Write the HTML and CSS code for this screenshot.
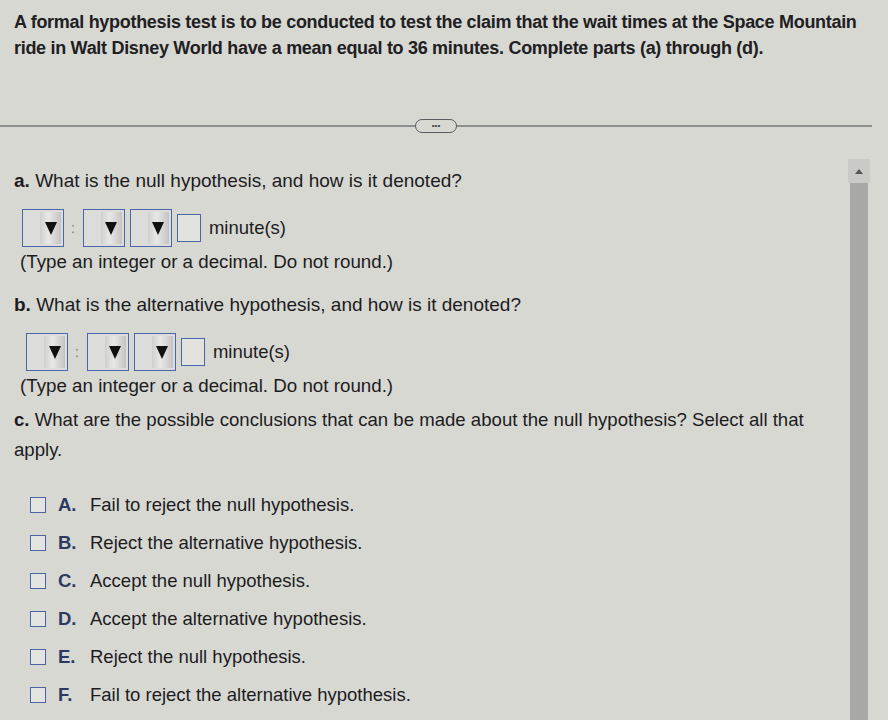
FILE: index.html
```html
<!DOCTYPE html>
<html>
<head>
<meta charset="utf-8">
<link rel="stylesheet" href="styles.css">
</head>
<body>
<div class="page">
  <header class="intro">A formal hypothesis test is to be conducted to test the claim that the wait times at the Space Mountain ride in Walt Disney World have a mean equal to 36 minutes. Complete parts (a) through (d).</header>
  <div class="divider"><span class="line"></span><span class="pill">&bull;&bull;&bull;</span><span class="line"></span></div>
  <div class="body">
    <main class="content">
      <p class="q qa">a. What is the null hypothesis, and how is it denoted?</p>
      <div class="answer">
        <span class="sel"><span class="btn"><span class="tri"></span></span></span>
        <span class="colon">:</span>
        <span class="sel"><span class="btn"><span class="tri"></span></span></span>
        <span class="sel"><span class="btn"><span class="tri"></span></span></span>
        <span class="inp"></span>
        <span class="unit">minute(s)</span>
      </div>
      <p class="hint">(Type an integer or a decimal. Do not round.)</p>

      <p class="q qb">b. What is the alternative hypothesis, and how is it denoted?</p>
      <div class="answer ab">
        <span class="sel"><span class="btn"><span class="tri"></span></span></span>
        <span class="colon">:</span>
        <span class="sel"><span class="btn"><span class="tri"></span></span></span>
        <span class="sel"><span class="btn"><span class="tri"></span></span></span>
        <span class="inp"></span>
        <span class="unit">minute(s)</span>
      </div>
      <p class="hint">(Type an integer or a decimal. Do not round.)</p>

      <p class="q qc">c. What are the possible conclusions that can be made about the null hypothesis? Select all that apply.</p>
      <ul class="opts">
        <li><span class="box"></span><span class="letter">A.</span><span>Fail to reject the null hypothesis.</span></li>
        <li><span class="box"></span><span class="letter">B.</span><span>Reject the alternative hypothesis.</span></li>
        <li><span class="box"></span><span class="letter">C.</span><span>Accept the null hypothesis.</span></li>
        <li><span class="box"></span><span class="letter">D.</span><span>Accept the alternative hypothesis.</span></li>
        <li><span class="box"></span><span class="letter">E.</span><span>Reject the null hypothesis.</span></li>
        <li><span class="box"></span><span class="letter">F.</span><span>Fail to reject the alternative hypothesis.</span></li>
      </ul>
    </main>
    <aside class="scroll">
      <div class="up"><span class="uptri"></span></div>
      <div class="thumb"></div>
    </aside>
  </div>
</div>
</body>
</html>
```
FILE: styles.css
```css
html, body {
  margin: 0;
  padding: 0;
  background: #d8d8d3;
}
body {
  font-family: "Liberation Sans", Arial, sans-serif;
  color: #1c1c1e;
  width: 888px;
  height: 720px;
  overflow: hidden;
}
.page {
  display: flex;
  flex-direction: column;
  height: 720px;
}
.intro {
  padding: 9px 14px 0 14px;
  font-size: 18px;
  line-height: 26px;
  font-weight: bold;
  letter-spacing: -0.3px;
  color: #202022;
  height: 100px;
  box-sizing: border-box;
}
.divider {
  display: flex;
  align-items: center;
  margin-top: 19px;
  width: 872px;
}
.divider .line {
  flex: 1;
  height: 2px;
  background: #8c908e;
}
.pill {
  width: 40px;
  height: 12px;
  border: 1.5px solid #5a5c60;
  border-radius: 7px;
  font-size: 8px;
  line-height: 12px;
  text-align: center;
  color: #3a3c44;
}
.body {
  flex: 1;
  display: flex;
  min-height: 0;
}
.content {
  flex: 1;
  padding-left: 14px;
}
.q {
  margin: 0;
  font-size: 19px;
  line-height: 24px;
}
.q::first-letter {
  font-weight: bold;
}
.qa { margin-top: 36px; }
.qb { margin-top: 20px; }
.qc {
  margin-top: 8px;
  line-height: 30px;
  font-size: 18.6px;
}
.answer {
  display: flex;
  align-items: center;
  margin-top: 16px;
  margin-left: 8px;
  height: 38px;
}
.ab {
  margin-top: 16px;
  margin-left: 12px;
}
.sel {
  width: 42px;
  height: 38px;
  border: 1.5px solid #4b66a6;
  box-sizing: border-box;
  display: flex;
  justify-content: flex-end;
  padding: 2px;
  background: #dcdddb;
  margin-right: 5px;
}
.btn {
  width: 21px;
  height: 100%;
  background: linear-gradient(90deg, #cfcfcd, #e8e8e6 40%, #c4c4c2);
  display: flex;
  align-items: center;
  justify-content: center;
}
.tri {
  width: 0;
  height: 0;
  border-left: 6px solid transparent;
  border-right: 6px solid transparent;
  border-top: 13px solid #111;
}
.colon {
  font-size: 14px;
  color: #777;
  margin: 0 8px 0 2px;
}
.inp {
  width: 24px;
  height: 28px;
  border: 1.5px solid #4b66a6;
  box-sizing: border-box;
  background: #e2e2de;
}
.unit {
  font-size: 18.5px;
  margin-left: 8px;
}
.hint {
  margin: 4px 0 0 6px;
  font-size: 18.75px;
  line-height: 22px;
}
.opts {
  list-style: none;
  margin: 21px 0 0 16px;
  padding: 0;
}
.opts li {
  display: flex;
  align-items: center;
  height: 38px;
  font-size: 18.5px;
}
.box {
  width: 16px;
  height: 16px;
  border: 1.5px solid #4b66a6;
  box-sizing: border-box;
  background: #e4e4e0;
  margin-right: 12px;
}
.letter {
  font-weight: bold;
  color: #2c3a62;
  width: 32px;
}
.scroll {
  width: 22px;
  margin: 26px 18px 0 0;
  display: flex;
  flex-direction: column;
  align-items: center;
}
.up {
  width: 22px;
  height: 24px;
  background: #cacac7;
  display: flex;
  align-items: center;
  justify-content: center;
}
.uptri {
  width: 0;
  height: 0;
  border-left: 4px solid transparent;
  border-right: 4px solid transparent;
  border-bottom: 5px solid #555;
}
.thumb {
  width: 18px;
  flex: 1;
  background: #a8a8a7;
}
```
